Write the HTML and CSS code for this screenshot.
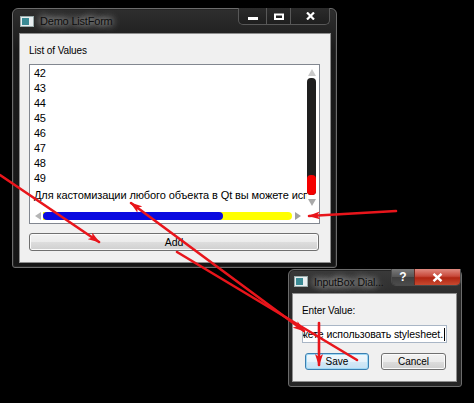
FILE: index.html
```html
<!DOCTYPE html>
<html lang="ru">
<head>
    <meta charset="UTF-8">
    <meta name="viewport" content="width=device-width, initial-scale=1.0">
    <title>Demo ListForm</title>
    <link rel="stylesheet" href="styles.css">
</head>
<body>
<div class="desktop">
    <!-- main window -->
    <div class="window main-win">
        <div class="titlebar">
            <span class="app-icon"><span class="app-icon-in"></span></span>
            <span class="title">Demo ListForm</span>
            <div class="caption">
                <span class="cap-btn cap-min">
                    <svg width="10" height="3" viewBox="0 0 10 3"><rect width="10" height="3" fill="#fff"/></svg>
                </span>
                <span class="cap-btn cap-max">
                    <svg width="10" height="7" viewBox="0 0 10 7"><rect x="1" y="1.5" width="8" height="4.5" fill="none" stroke="#fff" stroke-width="2"/></svg>
                </span>
                <span class="cap-btn cap-close">
                    <svg width="9" height="8" viewBox="0 0 9 8"><path d="M1 0.5 L8 7.5 M8 0.5 L1 7.5" stroke="#fff" stroke-width="2.2"/></svg>
                </span>
            </div>
        </div>
        <div class="client">
            <div class="label">List of Values</div>
            <div class="listbox">
                <div class="list-body">
                    <ul class="items">
                        <li>42</li>
                        <li>43</li>
                        <li>44</li>
                        <li>45</li>
                        <li>46</li>
                        <li>47</li>
                        <li>48</li>
                        <li>49</li>
                        <li class="long">Для кастомизации любого объекта в Qt вы можете использовать stylesheet.</li>
                    </ul>
                    <div class="vscroll">
                        <span class="arr-box"><span class="arr arr-up"></span></span>
                        <div class="vtrack"><div class="vthumb"></div></div>
                        <span class="arr-box"><span class="arr arr-down"></span></span>
                    </div>
                </div>
                <div class="hscroll">
                    <span class="arr-box h"><span class="arr arr-left"></span></span>
                    <div class="htrack"><div class="hthumb"></div></div>
                    <span class="arr-box h"><span class="arr arr-right"></span></span>
                </div>
            </div>
            <button class="btn btn-add">Add</button>
        </div>
    </div>

    <!-- input dialog -->
    <div class="window dialog">
        <div class="titlebar">
            <span class="app-icon"><span class="app-icon-in"></span></span>
            <span class="title">InputBox Dial...</span>
            <div class="caption dlg-caption">
                <span class="cap-btn cap-help">?</span>
                <span class="cap-btn cap-red">
                    <svg width="11" height="9" viewBox="0 0 11 9"><path d="M1.5 0.8 L9.5 8.2 M9.5 0.8 L1.5 8.2" stroke="#fff" stroke-width="2.4"/></svg>
                </span>
            </div>
        </div>
        <div class="client dlg-client">
            <div class="label">Enter Value:</div>
            <div class="input"><span>Для кастомизации любого объекта в Qt вы можете использовать stylesheet.</span><span class="caret"></span></div>
            <div class="dlg-buttons">
                <button class="btn btn-default">Save</button>
                <button class="btn">Cancel</button>
            </div>
        </div>
    </div>

    <!-- red annotation arrows -->
    <svg class="arrows" width="474" height="403" viewBox="0 0 474 403">
        <defs>
            <marker id="head" viewBox="0 0 12 8" refX="11" refY="4" markerWidth="12" markerHeight="8" markerUnits="userSpaceOnUse" orient="auto-start-reverse">
                <path d="M0 0 L12 4 L0 8 L3 4 Z" fill="#e8151b"/>
            </marker>
        </defs>
        <g stroke="#e8151b" stroke-width="2.6" fill="none" stroke-linecap="round">
            <line x1="0" y1="175" x2="99" y2="242" marker-end="url(#head)"/>
            <line x1="131" y1="203" x2="304" y2="331" marker-start="url(#head)" marker-end="url(#head)"/>
            <line x1="177" y1="252" x2="357" y2="360"/>
            <line x1="396" y1="211" x2="309" y2="216" marker-end="url(#head)"/>
            <line x1="319" y1="323" x2="319" y2="365" marker-end="url(#head)"/>
        </g>
    </svg>
</div>
</body>
</html>
```

FILE: styles.css
```css
*{padding: 0; margin: 0; box-sizing: border-box;}
ul,li{list-style: none;}
body{background: #000; font-family: "Liberation Sans", Arial, sans-serif; font-size: 10.5px; color: #000;}
.desktop{position: relative; width: 474px; height: 403px; overflow: hidden; background: #000;}

/* window frame */
.window{position: absolute; display: flex; flex-direction: column; border: 1px solid #6c6c6c; border-radius: 6px 6px 3px 3px; background: linear-gradient(#2e2e2e, #1a1a1a 40px, #161616); box-shadow: inset 0 0 0 1px #262626;}
.main-win{left: 12px; top: 8px; width: 325px; height: 260px; padding: 0 5px 4px 6px;}
.dialog{left: 288px; top: 269px; width: 174px; height: 118px; padding: 0 4px 4px 3px; background: linear-gradient(#3a3a3a, #2a2a2a 30px, #252525);}

.titlebar{height: 24px; display: flex; align-items: center; position: relative;}
.dialog .titlebar{height: 23px;}
.app-icon{width: 14px; height: 11px; margin: 0 6px 0 1px; background: #e8eef0; border: 1px solid #9aa; display: flex; align-items: center; padding-left: 1px;}
.app-icon-in{width: 7px; height: 7px; background: #3a8a94;}
.dialog .app-icon{margin-left: 2px; margin-right: 6px;}
.title{font-size: 11px; letter-spacing: -0.2px; color: #0d0d0d; text-shadow: 0 0 6px rgba(255,255,255,.75), 0 0 10px rgba(255,255,255,.55), 0 0 14px rgba(255,255,255,.35);}
.dialog .title{font-size: 10.5px; letter-spacing: -0.1px;}

/* caption buttons */
.caption{position: absolute; top: -1px; right: 0; height: 17px; display: flex; border: 1px solid #585858; border-top: 0; border-radius: 0 0 5px 5px; overflow: hidden; background: linear-gradient(#2b2b2b, #1e1e1e);}
.main-win .caption{width: 92px; right: 1px;}
.cap-btn{display: flex; align-items: center; justify-content: center; height: 100%; border-left: 1px solid #585858;}
.cap-btn:first-child{border-left: 0;}
.cap-min{width: 27px; padding-top: 4px;}
.cap-max{width: 24px;}
.cap-close{flex: 1;}
.dlg-caption{right: -4px; border-color: #4a4a4a;}
.cap-help{width: 22px; color: #fff; font-weight: bold; font-size: 12px; background: linear-gradient(#7a7a7a, #555 50%, #3e3e3e 51%, #4c4c4c);}
.cap-red{width: 46px; border-left-color: #6a2a22; background: linear-gradient(#e08a80, #c8493a 45%, #b02512 55%, #c84a30);}

/* client area */
.client{flex: 1; background: #f0f0f0; border: 1px solid #8e8e8e; padding: 10px 10px 11px 9px; display: flex; flex-direction: column;}
.label{height: 14px; line-height: 14px; font-size: 10px; letter-spacing: -0.1px; margin-bottom: 6px;}

.listbox{height: 160px; border: 1px solid #828790; background: #fff; display: flex; flex-direction: column; margin-bottom: 9px;}
.list-body{height: 144px; display: flex;}
.items{flex: 1; overflow: hidden; white-space: nowrap; padding: 1px 0 0 4px;}
.items li{height: 15px; line-height: 15px; font-size: 11px; letter-spacing: -0.3px;}
.items li.long{font-size: 11px; letter-spacing: -0.1px; line-height: 17px; height: 17px; margin-top: 1px;}

.vscroll{width: 9px; margin-right: 3px; display: flex; flex-direction: column; padding-top: 1px;}
.vscroll .arr-box{height: 12px;}
.vtrack{height: 117px; margin: 0 0 1px 0; background: #1e1e1e; border-radius: 4px; display: flex; flex-direction: column; justify-content: flex-end;}
.vthumb{height: 20px; background: #f40000; border-radius: 4px;}

.arr-box{display: flex; align-items: center; justify-content: center;}
.arr{width: 0; height: 0; border-style: solid; border-color: transparent;}
.arr-up{border-width: 0 4px 7px 4px; border-bottom-color: #c9c9c9;}
.arr-down{border-width: 7px 4px 0 4px; border-top-color: #a9a9a9;}
.arr-left{border-width: 4px 6px 4px 0; border-right-color: #b5b5b5;}
.arr-right{border-width: 4px 0 4px 6px; border-left-color: #a0a0a0;}

.hscroll{height: 14px; display: flex; align-items: center; padding: 0 0 1px 3px;}
.hscroll .arr-box{width: 9px; height: 8px;}
.hscroll .arr-box:last-child{width: 12px;}
.htrack{width: 249px; height: 8px; margin-left: 1px; background: #ffff00; border-radius: 0 4px 4px 0;}
.hthumb{width: 180px; height: 8px; background: #0a0ae0; border-radius: 4px;}

/* buttons */
.btn{height: 18px; font-family: inherit; font-size: 10.5px; color: #000; border: 1px solid #707070; border-radius: 3px; background: linear-gradient(#f2f2f2, #ebebeb 50%, #dddddd 51%, #cfcfcf); box-shadow: inset 0 0 0 1px #fbfbfb;}
.btn-add{width: 290px;}

/* dialog */
.dlg-client{padding: 10px 9px 11px 9px;}
.dlg-client .label{margin-bottom: 7px;}
.input{height: 18px; border: 1px solid #a9b6c6; background: #fff; display: flex; justify-content: flex-end; align-items: center; overflow: hidden; white-space: nowrap; font-size: 10.5px; letter-spacing: -0.1px; padding-right: 1px; margin-bottom: 10px;}
.input span{flex: none;}
.caret{width: 1px; height: 13px; background: #000; margin-left: 1px;}
.dlg-buttons{display: flex; gap: 12px; padding-left: 3px;}
.dlg-buttons .btn{width: 64px; height: 17px; font-size: 10px;}
.dlg-buttons .btn:last-child{width: 65px;}
.btn-default{border-color: #3c7fb1; box-shadow: inset 0 0 0 1px #9ed8f5; background: linear-gradient(#f2f8fc, #e6f2fa 50%, #d3e9f7 51%, #c6e1f3);}

.arrows{position: absolute; left: 0; top: 0; pointer-events: none;}
```
